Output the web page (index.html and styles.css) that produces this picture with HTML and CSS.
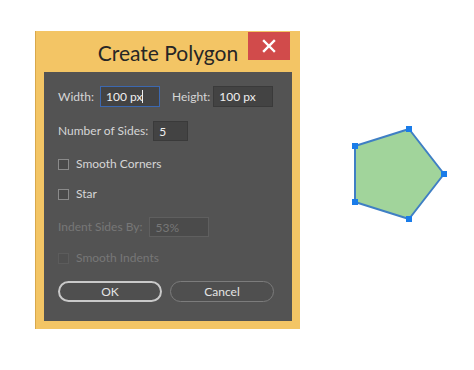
FILE: index.html
```html
<!DOCTYPE html>
<html lang="en">
<head>
  <meta charset="UTF-8">
  <title>Create Polygon</title>
  <link rel="stylesheet" href="styles.css">
</head>
<body>
  <div class="dialog">
    <div class="title-bar">
      <div class="title">Create Polygon</div>
      <button class="close-button">
        <svg width="14" height="14" viewBox="0 0 14 14">
          <path d="M2 2 L12 12 M12 2 L2 12" stroke="#ffffff" stroke-width="2.4" stroke-linecap="square"/>
        </svg>
      </button>
    </div>

    <div class="panel">
      <div class="row row-size">
        <span class="label">Width:</span>
        <div class="field field-wide focused">100 px<span class="caret"></span></div>
        <span class="label label-height">Height:</span>
        <div class="field field-wide field-height">100 px</div>
      </div>

      <div class="row row-sides">
        <span class="label">Number of Sides:</span>
        <div class="field field-small">5</div>
      </div>

      <label class="check-row row-corners">
        <span class="checkbox"></span>
        <span class="label">Smooth Corners</span>
      </label>

      <label class="check-row row-star">
        <span class="checkbox"></span>
        <span class="label">Star</span>
      </label>

      <div class="row row-indent disabled">
        <span class="label">Indent Sides By:</span>
        <div class="field field-indent">53%</div>
      </div>

      <label class="check-row row-indents disabled">
        <span class="checkbox"></span>
        <span class="label">Smooth Indents</span>
      </label>

      <div class="buttons">
        <button class="button button-ok">OK</button>
        <button class="button button-cancel">Cancel</button>
      </div>
    </div>
  </div>

  <svg class="preview" width="120" height="110" viewBox="0 0 120 110">
    <polygon points="15,26 69,9 104,54 69,99 15,82" fill="#a1d49b" stroke="#3f7fc4" stroke-width="2" stroke-linejoin="round"/>
    <rect x="12" y="23" width="6" height="6" fill="#1a7ce9"/>
    <rect x="66" y="6" width="6" height="6" fill="#1a7ce9"/>
    <rect x="101" y="51" width="6" height="6" fill="#1a7ce9"/>
    <rect x="66" y="96" width="6" height="6" fill="#1a7ce9"/>
    <rect x="12" y="79" width="6" height="6" fill="#1a7ce9"/>
  </svg>
</body>
</html>
```

FILE: styles.css
```css
* {
  box-sizing: border-box;
  margin: 0;
  padding: 0;
  font-family: Lato, "Noto Sans", Arial, sans-serif;
}

body {
  display: flex;
  align-items: flex-start;
  background-color: #ffffff;
  padding: 31px 0 0 35px;
  width: 474px;
  height: 370px;
  overflow: hidden;
}

.dialog {
  width: 265px;
  height: 298px;
  background-color: #f3c565;
  border-left: 1px solid #d8a84c;
  display: flex;
  flex-direction: column;
}

.title-bar {
  height: 41px;
  display: grid;
  grid-template-columns: 1fr auto 1fr;
  align-items: start;
}

.title {
  grid-column: 2;
  font-size: 21px;
  color: #262626;
  padding-top: 9px;
  line-height: 26px;
}

.close-button {
  grid-column: 3;
  justify-self: end;
  width: 42px;
  height: 28px;
  margin-top: 1px;
  margin-right: 10px;
  background-color: #d14b4b;
  border: none;
  display: flex;
  align-items: center;
  justify-content: center;
}

.panel {
  margin: 0 8px 8px 8px;
  flex: 1;
  background-color: #535353;
  padding: 14px 0 0 14px;
  display: flex;
  flex-direction: column;
}

.row {
  display: flex;
  align-items: center;
  height: 21px;
}

.label {
  font-size: 12px;
  color: #d6d6d6;
  line-height: 16px;
}

.field {
  height: 21px;
  background-color: #434343;
  border: 1px solid #3a3a3a;
  color: #f0f0f0;
  font-size: 12px;
  line-height: 19px;
  padding-left: 5px;
  display: flex;
  align-items: center;
}

.field-wide {
  width: 60px;
  margin-left: 6px;
}

.field-height {
  margin-left: 3px;
}

.focused {
  border: 1px solid #3c68b0;
}

.caret {
  width: 1px;
  height: 13px;
  background-color: #f0f0f0;
}

.label-height {
  margin-left: 12px;
}

.field-small {
  width: 35px;
  margin-left: 5px;
}

.row-sides {
  margin-top: 14px;
  height: 20px;
}

.row-sides .field {
  height: 20px;
}

.check-row {
  display: flex;
  align-items: center;
  height: 20px;
}

.checkbox {
  width: 11px;
  height: 11px;
  border: 1px solid #8a8a8a;
  background-color: #4a4a4a;
  margin-right: 7px;
}

.row-corners {
  margin-top: 13px;
}

.row-star {
  margin-top: 10px;
}

.row-indent {
  margin-top: 13px;
  height: 20px;
}

.field-indent {
  width: 60px;
  height: 20px;
  margin-left: 7px;
  background-color: #4b4b4b;
  border: 1px solid #5f5f5f;
}

.disabled .label,
.disabled .field {
  color: #777777;
}

.disabled .checkbox {
  border-color: #5c5c5c;
  background-color: #505050;
}

.row-indents {
  margin-top: 11px;
}

.buttons {
  display: flex;
  gap: 8px;
  margin-top: 13px;
}

.button {
  width: 104px;
  height: 21px;
  border-radius: 11px;
  background-color: #4f4f4f;
  color: #e4e4e4;
  font-size: 12px;
  font-family: Lato, "Noto Sans", Arial, sans-serif;
}

.button-ok {
  border: 2px solid #c9c9c9;
}

.button-cancel {
  border: 1px solid #7c7c7c;
}

.preview {
  margin: 89px 0 0 40px;
  flex-shrink: 0;
}
```
